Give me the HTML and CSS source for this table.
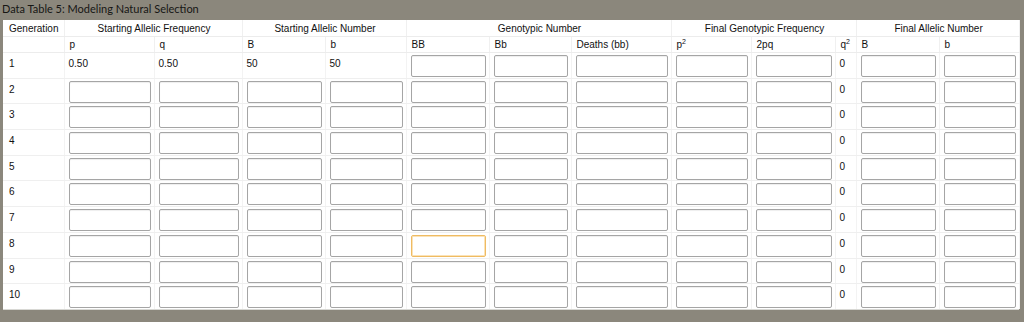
FILE: index.html
```html
<!DOCTYPE html>
<html lang="en">
<head>
  <meta charset="UTF-8" />
  <meta name="viewport" content="width=device-width, initial-scale=1.0" />
  <title>Data Table 5: Modeling Natural Selection</title>
  <link rel="stylesheet" href="styles.css">
</head>
<body>
  <div class="caption">Data Table 5: Modeling Natural Selection</div>
  <div class="sheet">
    <table id="selectionTable">
      <colgroup>
        <col style="width: 61px"><col style="width: 90px"><col style="width: 88px">
        <col style="width: 83px"><col style="width: 81px"><col style="width: 83px">
        <col style="width: 82px"><col style="width: 100px"><col style="width: 80px">
        <col style="width: 84px"><col style="width: 21px"><col style="width: 83px">
        <col style="width: 80px">
      </colgroup>
      <thead>
        <tr class="group">
          <th class="left">Generation</th>
          <th colspan="2">Starting Allelic Frequency</th>
          <th colspan="2">Starting Allelic Number</th>
          <th colspan="3">Genotypic Number</th>
          <th colspan="3">Final Genotypic Frequency</th>
          <th colspan="2">Final Allelic Number</th>
        </tr>
        <tr class="sub">
          <th></th>
          <th>p</th><th>q</th>
          <th>B</th><th>b</th>
          <th>BB</th><th>Bb</th><th>Deaths (bb)</th>
          <th>p<sup>2</sup></th><th>2pq</th><th>q<sup>2</sup></th>
          <th>B</th><th>b</th>
        </tr>
      </thead>
      <tbody></tbody>
    </table>
  </div>

  <script>
    // generation 1 starts from fixed values, the rest are filled in by hand
    const body = document.querySelector("#selectionTable tbody");
    for (let gen = 1; gen <= 10; gen++) {
      const row = body.insertRow();
      row.insertCell().textContent = gen;
      for (let c = 1; c <= 12; c++) {
        const cell = row.insertCell();
        if (c === 10) {
          cell.textContent = "0";
        } else if (gen === 1 && c <= 4) {
          cell.textContent = c <= 2 ? "0.50" : "50";
        } else {
          const input = document.createElement("input");
          input.type = "text";
          if (gen === 8 && c === 5) input.className = "active";
          cell.appendChild(input);
        }
      }
    }
  </script>
</body>
</html>
```

FILE: styles.css
```css
body {
  margin: 0;
  background-color: #8b877c;
  font-family: "Liberation Sans", Arial, sans-serif;
  color: #111;
}
.caption {
  font-family: Lato, "Liberation Sans", sans-serif;
  font-size: 11px;
  color: #161614;
  height: 20px;
  line-height: 18px;
  padding-left: 2px;
}
.sheet {
  background-color: #fff;
  margin-left: 3px;
  width: 1016px;
  border-bottom: 1px solid #d8d8d4;
}
table {
  width: 100%;
  table-layout: fixed;
  border-collapse: collapse;
  font-size: 10px;
}
th {
  font-weight: normal;
  text-align: center;
  padding: 0 3px 0 5px;
  border-right: 1px solid #f0f0f0;
  border-bottom: 1px solid #ececec;
  white-space: nowrap;
}
th.left {
  text-align: left;
  padding-left: 6px;
}
tr.group th {
  height: 16px;
}
tr.sub th {
  height: 15px;
  text-align: left;
}
sup {
  font-size: 7px;
  line-height: 0;
}
td {
  vertical-align: top;
  padding: 2px 3px 0 4px;
  height: 22.7px;
  border-right: 1px solid #f3f3f3;
  border-bottom: 1px solid #efefef;
  line-height: 14px;
}
td:first-child {
  padding-left: 6px;
  padding-top: 4px;
  height: 20.7px;
}
td:not(:has(input)) {
  padding-top: 4px;
  height: 20.7px;
}
tbody tr:last-child td {
  border-bottom: none;
}
input {
  display: block;
  box-sizing: border-box;
  width: 100%;
  height: 22px;
  margin: 0;
  border: 1px solid #a5a5a5;
  border-radius: 2px;
  box-shadow: inset 0 1px 1px rgba(0, 0, 0, 0.07);
  background-color: #fff;
}
input.active {
  border: 1px solid #efbb62;
  box-shadow: inset 0 0 0 1px #fbe3b8;
}
```
